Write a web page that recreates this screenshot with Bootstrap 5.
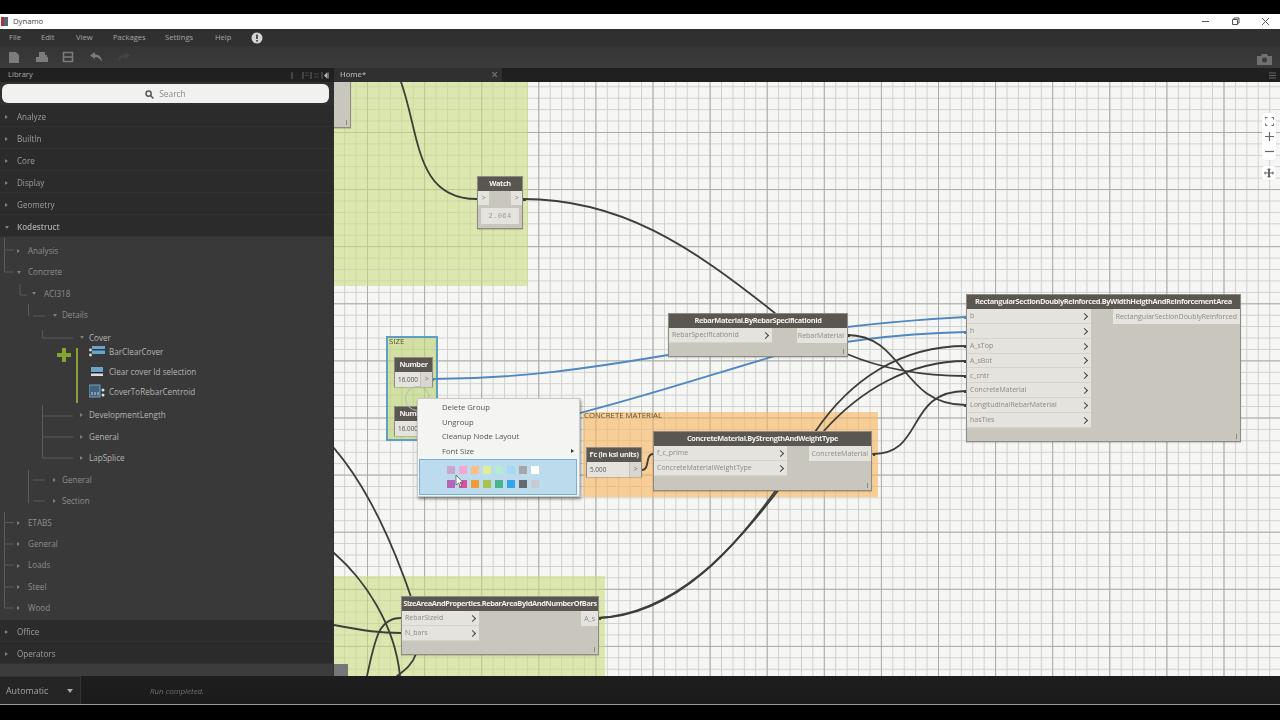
<!DOCTYPE html>
<html lang="en">
<head>
<meta charset="UTF-8" />
<title>Dynamo</title>
<link href="https://cdn.jsdelivr.net/npm/bootstrap@5.3.0/dist/css/bootstrap.min.css" rel="stylesheet" />
<style>
  html, body { height: 720px; overflow: hidden; background: #000; }
  body { font-family: "Open Sans", "Liberation Sans", sans-serif; }
  .app-root { height: 720px; padding-top: 14px; filter: blur(.45px); }

  .title-strip { height: 15px; background: #fff; font-size: 7.7px; color: #444; flex-shrink: 0; }
  .app-logo { width: 7px; height: 9px; margin: 0 5px 0 1px; background: linear-gradient(90deg, #a33 50%, #567 50%); }
  .win-btn { width: 30px; }

  .menu-strip { height: 17px; background: #2f302f; font-size: 7.6px; color: #a5a6a5; padding-left: 9px; flex-shrink: 0; }
  .m-file { width: 32px; } .m-edit { width: 35px; } .m-view { width: 37px; }
  .m-pack { width: 52px; } .m-sett { width: 50px; } .m-help { width: 36px; }
  .tool-strip { height: 22px; background: linear-gradient(#343534, #3a3b3a); padding-left: 8px; flex-shrink: 0; }
  .tool-btn { width: 27.2px; height: 22px; }

  .head-strip { height: 14px; background: #1f201f; font-size: 7.6px; color: #a9aaa9; flex-shrink: 0; }
  .lib-title { width: 334px; padding: 0 5px 0 8px; }
  .tab-home { width: 168px; background: #2f302f; color: #a8a9a8; font-weight: 600; padding: 0 4px 0 6px; }
  .tab-close { color: #777; font-size: 12px; line-height: 1; }

  .work-row { height: 594px; flex-shrink: 0; }
  .lib-panel { width: 334px; background: #2f302f; font-size: 8.1px; }
  .search-wrap { height: 23px; padding: 2px 5px 0 2px; flex-shrink: 0; }
  .search-box { height: 19px; padding-top: 1px; background: #f1f1ef; border-radius: 6px; color: #8b8b8b; font-size: 8.4px; gap: 5px; }
  .lib-head { height: 22px; width: 333px; flex-shrink: 0; background: #2a2b2a; color: #9d9e9d; border-bottom: 1px solid #313231; padding: 3px 0 0 5px; }
  .lib-head .tri-box { width: 12px; }
  .lib-head.is-open { color: #a9aaa9; font-weight: 600; }
  .lib-tree { width: 333px; height: 383px; flex-shrink: 0; background: #383938; padding-top: 3px; }
  .tree-lines { left: 0; top: 0; }
  .tree-row { height: 21.44px; color: #8d8e8d; }
  .tri-box { display: flex; align-items: center; }
  .lvl-1 { padding-left: 17px; } .lvl-1 .tri-box { width: 11px; }
  .lvl-2 { padding-left: 32px; } .lvl-2 .tri-box { width: 12px; }
  .lvl-3 { padding-left: 53px; } .lvl-3 .tri-box { width: 9px; }
  .lvl-4 { padding-left: 80px; color: #b4b5b4; } .lvl-4 .tri-box { width: 9px; }
  .cover-row { margin-top: 2px; height: 20px; }
  .leaf-wrap { height: 57px; padding-left: 57px; }
  .leaf-plus { width: 19px; }
  .leaf-bar { width: 2px; height: 55px; background: #8aa036; flex-shrink: 0; }
  .leaf-list { margin: -6px 0 0 0; padding-left: 11px; color: #b4b5b4; }
  .leaf-row { height: 20px; gap: 4px; }
  .lib-foot { height: 12px; width: 333px; background: #3b3c3b; flex-shrink: 0; }
  .tri-r { width: 0; height: 0; border-left: 3.5px solid #7d7e7d; border-top: 2.5px solid transparent; border-bottom: 2.5px solid transparent; }
  .tri-d { width: 0; height: 0; border-top: 3.5px solid #7d7e7d; border-left: 2.5px solid transparent; border-right: 2.5px solid transparent; }

  .status-strip { height: 29px; flex-shrink: 0; background: linear-gradient(#1d1e1d, #1a1b1a); border-bottom: 1px solid #999; }
  .run-mode { width: 81px; height: 28px; background: #242524; border-right: 1px solid #333; border-top: 1px solid #333; color: #a3a4a3; font-size: 8.9px; padding: 1px 7px 0 6px; }
  .run-mode .tri-d { border-top: 4px solid #aaa; border-left: 3px solid transparent; border-right: 3px solid transparent; }
  .run-msg { color: #6f706f; font-style: italic; font-size: 7.9px; margin: 3px 0 0 69px; }

  .canvas-area { width: 946px; height: 594px; background: #f6f7f5; overflow: hidden; }
  .grid-layer, .wire-layer { left: 0; top: 0; }

  .grp-box { position: absolute; }
  .grp-top { left: 0; top: 0; width: 194px; height: 204px; background: rgba(203, 220, 130, .6); }
  .grp-bot { left: 0; top: 494px; width: 271px; height: 100px; background: rgba(203, 220, 130, .6); }
  .grp-size { left: 52px; top: 254px; width: 52px; height: 105px; background: rgba(190, 212, 120, .65); border: 2px solid #5f9fc4; }
  .grp-conc { left: 249px; top: 330px; width: 295px; height: 85px; background: rgba(248, 180, 95, .62); }
  .grp-name { font-size: 7.8px; color: #5b5438; line-height: 1; position: absolute; left: 1px; top: 0; white-space: nowrap; }

  .dyn-node { position: absolute; background: #c9c6bd; border: 1px solid #8d8b82; box-shadow: 0 1px 1px rgba(0,0,0,.15); font-size: 7px; color: #8a8a84; }
  .dyn-head { height: 14px; padding-bottom: 1px; background: #5a5650; color: #f2f1ee; font-weight: 700; font-size: 7.4px; letter-spacing: -.38px; white-space: nowrap; }
  .port-in { height: 14.85px; background: #e5e3dd; border-bottom: 1px solid #d5d3cc; padding: 1px 1px 0 3px; }
  .port-out { height: 14.85px; background: #e5e3dd; padding: 1px 3px 0; }
  .port-chev { width: 5px; height: 5px; border-top: 1.6px solid #444; border-right: 1.6px solid #444; transform: rotate(45deg); margin-right: 3px; }
  .node-tick { position: absolute; right: 3px; bottom: 2px; width: 1px; height: 5px; background: #8d8b82; }

  .n-stub { left: -2px; top: -2px; width: 19px; height: 48px; }
  .n-watch { left: 143px; top: 94px; width: 46px; height: 53px; }
  .n-rebar { left: 334px; top: 231px; width: 180px; height: 44px; }
  .n-conc { left: 319px; top: 349px; width: 219px; height: 60px; }
  .n-fc { left: 252px; top: 365px; width: 56px; height: 30px; }
  .n-num1 { left: 60px; top: 275px; width: 39px; height: 30px; }
  .n-num2 { left: 60px; top: 324px; width: 39px; height: 30px; }
  .n-rect { left: 632px; top: 212px; width: 275px; height: 148px; }
  .n-size { left: 67px; top: 514px; width: 198px; height: 59px; }
  .in-rebar { width: 103px; } .out-rebar { width: 50px; }
  .in-conc { width: 133px; } .out-conc { width: 62px; }
  .in-rect { width: 124px; } .out-rect { width: 127px; }
  .in-size { width: 77px; } .out-size { width: 17px; }
  .watch-cell { width: 11px; height: 14px; background: #e5e3dd; font-family: "Liberation Mono", monospace; font-size: 7px; }
  .watch-val { height: 16px; margin: 3px 3px 0; background: #e5e3dd; font-family: "Liberation Mono", monospace; font-size: 7px; letter-spacing: .4px; color: #999; }
  .val-cell { background: #e5e3dd; color: #555; font-size: 6.4px; padding-left: 3px; height: 15px; }
  .val-port { background: #d8d6cf; border-left: 1px solid #c4c2ba; width: 12px; height: 15px; flex-shrink: 0; font-family: "Liberation Mono", monospace; font-size: 7px; color: #777; }

  .hover-ring { position: absolute; left: 71px; top: 304px; width: 25px; height: 25px; border-radius: 50%; border: 1.5px solid #a9bfc4; }
  .ctx-menu { position: absolute; left: 83px; top: 316px; width: 163px; height: 99px; min-width: 0; padding: 0; margin: 0; background: #f4f4f2; border: 1px solid #c9c9c6; border-radius: 0; box-shadow: 1px 2px 3px rgba(0,0,0,.45); font-size: 7.7px; }
  .ctx-menu .dropdown-item { height: 14.7px; padding: 0 0 0 24px; color: #555; line-height: 14.7px; position: relative; }
  .ctx-list { padding-top: 1px; }
  .ctx-arrow { position: absolute; right: 5px; top: 5px; border-left: 3.5px solid #333; border-top: 2.5px solid transparent; border-bottom: 2.5px solid transparent; }
  .swatch-box { margin: 0 2px 0 1px; height: 36px; background: #bcdcee; border: 1px solid #73b3d8; padding: 6px 0 0 27px; gap: 6px; }
  .swatch-row { gap: 4px; }
  .swatch { width: 8px; height: 8px; }
  .sw-a1 { background: #c9a6cf; } .sw-a2 { background: #f5a6d5; } .sw-a3 { background: #fbc08a; } .sw-a4 { background: #e0ee9a; }
  .sw-a5 { background: #b5ecd0; } .sw-a6 { background: #a4d8f5; } .sw-a7 { background: #a6a6a6; } .sw-a8 { background: #fff; }
  .sw-b1 { background: #b565b9; } .sw-b2 { background: #dd4f9e; } .sw-b3 { background: #f39c36; } .sw-b4 { background: #a6c24f; }
  .sw-b5 { background: #48b48e; } .sw-b6 { background: #35a4ee; } .sw-b7 { background: #646a6e; } .sw-b8 { background: #c8ccd0; }
  .mouse-arrow { position: absolute; left: 121px; top: 392px; z-index: 1001; }

  .zoom-pill { right: 4px; top: 31px; width: 14px; height: 47px; background: #fff; border-radius: 2px; box-shadow: 0 0 1px rgba(0,0,0,.2); }
  .pan-pill { right: 4px; top: 84px; width: 14px; height: 14px; background: #fff; border-radius: 2px; box-shadow: 0 0 1px rgba(0,0,0,.2); }
  .h-stub { left: 0; bottom: 0; width: 14px; height: 12px; background: #777; }
</style>
</head>
<body>
<div class="app-root d-flex flex-column">

  <div class="title-strip d-flex align-items-center">
    <span class="app-logo"></span><span>Dynamo</span>
    <div class="ms-auto d-flex align-items-center">
      <span class="win-btn d-flex justify-content-center"><svg width="9" height="9"><path d="M1 4.500h7" stroke="#555"/></svg></span>
      <span class="win-btn d-flex justify-content-center"><svg width="9" height="9" fill="none" stroke="#555"><path d="M1.500 2.500h5v5h-5zM3 2.500V1h5v5H6.500"/></svg></span>
      <span class="win-btn d-flex justify-content-center"><svg width="9" height="9" stroke="#555"><path d="M1 1l7 7M8 1L1 8"/></svg></span>
    </div>
  </div>

  <div class="menu-strip d-flex align-items-center">
    <span class="m-file">File</span><span class="m-edit">Edit</span><span class="m-view">View</span>
    <span class="m-pack">Packages</span><span class="m-sett">Settings</span><span class="m-help">Help</span>
    <svg width="12" height="12"><circle cx="6" cy="6" r="5.500" fill="#d5d5d5"/><rect x="5.200" y="2.500" width="1.600" height="4.500" fill="#333"/><rect x="5.200" y="8" width="1.600" height="1.600" fill="#333"/></svg>
  </div>

  <div class="tool-strip d-flex align-items-center">
    <span class="tool-btn d-flex align-items-center"><svg width="12" height="12"><path d="M1 1h7l3 3v8H1z" fill="#7b7c7b"/></svg></span>
    <span class="tool-btn d-flex align-items-center"><svg width="14" height="12"><path d="M4 1h6v3h2v2h1v5H1V6h3z" fill="#7b7c7b"/></svg></span>
    <span class="tool-btn d-flex align-items-center"><svg width="12" height="12" fill="none" stroke="#7b7c7b" stroke-width="1.600"><path d="M1.500 1.500h9v9h-9zM1.500 6h9"/></svg></span>
    <span class="tool-btn d-flex align-items-center"><svg width="13" height="11"><path d="M5 0L0 3.500 5 7V5c3 0 5 1.500 7 5 0-5-3-7.500-7-7.500z" fill="#7b7c7b"/></svg></span>
    <span class="tool-btn d-flex align-items-center"><svg width="13" height="11"><path d="M8 0l5 3.500L8 7V5C5 5 3 6.500 1 10c0-5 3-7.500 7-7.500z" fill="#444544"/></svg></span>
    <span class="ms-auto me-2"><svg width="15" height="12"><path d="M0 3h4l1-2h5l1 2h4v9H0z" fill="#6f706f"/><circle cx="7.500" cy="7" r="2.500" fill="#3a3b3a"/></svg></span>
  </div>

  <div class="head-strip d-flex">
    <div class="lib-title d-flex align-items-center justify-content-between">
      <span>Library</span>
      <svg width="38" height="9"><path d="M1 1v7M12 1v7M20 1v7M31 1v7" stroke="#666"/><path d="M14 2h4M14 4.500h4" stroke="#444"/><path d="M23 3h5M23 6h5" stroke="#444"/><path d="M33 4.500l3-3v6z" fill="#bbb"/><path d="M37 1.500v6" stroke="#bbb"/></svg>
    </div>
    <div class="tab-home d-flex align-items-center justify-content-between"><span>Home*</span><span class="tab-close">×</span></div>
    <div class="flex-grow-1 d-flex justify-content-end align-items-center pe-1">
      <svg width="7" height="7"><path d="M0 1h7M0 3.500h7M0 6h7" stroke="#666"/></svg>
    </div>
  </div>

  <div class="work-row d-flex">
    <aside class="lib-panel d-flex flex-column">
      <div class="search-wrap">
        <div class="search-box d-flex align-items-center justify-content-center">
          <svg width="9" height="9" fill="none" stroke="#555" stroke-width="1.500"><circle cx="3.600" cy="3.600" r="2.600"/><path d="M5.500 5.500L8.500 8.500"/></svg>
          <span>Search</span>
        </div>
      </div>
      <div class="lib-head d-flex align-items-center"><span class="tri-box"><span class="tri-r"></span></span>Analyze</div>
      <div class="lib-head d-flex align-items-center"><span class="tri-box"><span class="tri-r"></span></span>BuiltIn</div>
      <div class="lib-head d-flex align-items-center"><span class="tri-box"><span class="tri-r"></span></span>Core</div>
      <div class="lib-head d-flex align-items-center"><span class="tri-box"><span class="tri-r"></span></span>Display</div>
      <div class="lib-head d-flex align-items-center"><span class="tri-box"><span class="tri-r"></span></span>Geometry</div>
      <div class="lib-head is-open d-flex align-items-center"><span class="tri-box"><span class="tri-d"></span></span>Kodestruct</div>

      <div class="lib-tree position-relative">
        <svg class="tree-lines position-absolute" width="333" height="383" viewBox="0 237 333 383" fill="none" stroke="#5a5b5a">
          <path d="M4.500 238V272H14M4.500 250H14"/>
          <path d="M20 284V295H27"/>
          <path d="M28.500 304V316M33 316H45"/>
          <path d="M42.500 330V338H73"/>
          <path d="M42.500 405V458H73M42.500 416H73M42.500 437H73"/>
          <path d="M28.500 470V503M33 480H45M33 501H45"/>
          <path d="M4.500 512V608H14M4.500 522.500H14M4.500 544H14M4.500 565H14M4.500 587H14"/>
        </svg>
        <div class="tree-row lvl-1 d-flex align-items-center"><span class="tri-box"><span class="tri-r"></span></span>Analysis</div>
        <div class="tree-row lvl-1 d-flex align-items-center"><span class="tri-box"><span class="tri-d"></span></span>Concrete</div>
        <div class="tree-row lvl-2 d-flex align-items-center"><span class="tri-box"><span class="tri-d"></span></span>ACI318</div>
        <div class="tree-row lvl-3 d-flex align-items-center"><span class="tri-box"><span class="tri-d"></span></span>Details</div>
        <div class="tree-row lvl-4 cover-row d-flex align-items-center"><span class="tri-box"><span class="tri-d"></span></span>Cover</div>
        <div class="leaf-wrap d-flex">
          <div class="leaf-plus"><svg class="d-block" width="14" height="14"><path d="M5 0h4v5h5v4H9v5H5V9H0V5h5z" fill="#86a32f"/></svg></div>
          <span class="leaf-bar"></span>
          <ul class="leaf-list list-unstyled">
            <li class="leaf-row d-flex align-items-center"><svg width="16" height="13"><rect x="3" y="1" width="13" height="8" fill="#6ea3c9"/><rect x="3" y="4" width="13" height="1.500" fill="#1e3a55"/><circle cx="1.500" cy="5" r="1.400" fill="#ddd"/><circle cx="1.500" cy="10" r="1.400" fill="#ddd"/></svg><span>BarClearCover</span></li>
            <li class="leaf-row d-flex align-items-center"><svg width="16" height="11"><rect x="2" y="1" width="12" height="5" fill="#6ea3c9"/><rect x="2" y="6" width="12" height="1.500" fill="#222"/><rect x="2" y="7.500" width="12" height="2.500" fill="#ddd"/></svg><span>Clear cover Id selection</span></li>
            <li class="leaf-row d-flex align-items-center"><svg width="16" height="15"><rect x="0" y="1" width="11" height="12" fill="#41637e" stroke="#6ea3c9"/><path d="M3 8v3M6 8v3M9 8v3" stroke="#ccc"/><circle cx="14" cy="6" r="1.500" fill="#ddd"/><circle cx="14" cy="11" r="1.500" fill="#ddd"/></svg><span>CoverToRebarCentroid</span></li>
          </ul>
        </div>
        <div class="tree-row lvl-4 d-flex align-items-center"><span class="tri-box"><span class="tri-r"></span></span>DevelopmentLength</div>
        <div class="tree-row lvl-4 d-flex align-items-center"><span class="tri-box"><span class="tri-r"></span></span>General</div>
        <div class="tree-row lvl-4 d-flex align-items-center"><span class="tri-box"><span class="tri-r"></span></span>LapSplice</div>
        <div class="tree-row lvl-3 d-flex align-items-center"><span class="tri-box"><span class="tri-r"></span></span>General</div>
        <div class="tree-row lvl-3 d-flex align-items-center"><span class="tri-box"><span class="tri-r"></span></span>Section</div>
        <div class="tree-row lvl-1 d-flex align-items-center"><span class="tri-box"><span class="tri-r"></span></span>ETABS</div>
        <div class="tree-row lvl-1 d-flex align-items-center"><span class="tri-box"><span class="tri-r"></span></span>General</div>
        <div class="tree-row lvl-1 d-flex align-items-center"><span class="tri-box"><span class="tri-r"></span></span>Loads</div>
        <div class="tree-row lvl-1 d-flex align-items-center"><span class="tri-box"><span class="tri-r"></span></span>Steel</div>
        <div class="tree-row lvl-1 d-flex align-items-center"><span class="tri-box"><span class="tri-r"></span></span>Wood</div>
      </div>

      <div class="lib-head d-flex align-items-center"><span class="tri-box"><span class="tri-r"></span></span>Office</div>
      <div class="lib-head d-flex align-items-center"><span class="tri-box"><span class="tri-r"></span></span>Operators</div>
      <div class="lib-foot"></div>
    </aside>

    <main class="canvas-area position-relative">
      <svg class="grid-layer position-absolute" width="946" height="594">
        <defs>
          <pattern id="minorGrid" x="10.160" y="4.300" width="11.420" height="11.420" patternUnits="userSpaceOnUse">
            <path d="M0 .5H11.420M.5 0V11.420" stroke="#cfd1cf" stroke-width="1" fill="none"/>
          </pattern>
          <pattern id="majorGrid" x="33" y="50" width="57.100" height="57.100" patternUnits="userSpaceOnUse">
            <path d="M0 .5H57.100M.5 0V57.100" stroke="#a9aca9" stroke-width="1" fill="none"/>
          </pattern>
        </defs>
        <rect width="946" height="594" fill="url(#minorGrid)"/>
        <rect width="946" height="594" fill="url(#majorGrid)"/>
      </svg>

      <div class="grp-box grp-top"></div>
      <div class="grp-box grp-bot"></div>
      <div class="grp-box grp-size"><span class="grp-name">SIZE</span></div>
      <div class="grp-box grp-conc"><span class="grp-name">CONCRETE MATERIAL</span></div>

      <svg class="wire-layer position-absolute" width="946" height="594" viewBox="334 82 946 594" fill="none" stroke-linecap="round">
        <g stroke="#4f87c0" stroke-width="1.800">
          <path d="M431 379C520 379 590 368 668 355C760 338 860 322 966 317"/>
          <path d="M580 413C650 395 710 375 775 356C830 342 890 334 966 332"/>
        </g>
        <g stroke="#3c3e38" stroke-width="1.800">
          <path d="M401 82C420 135 415 199 477 199"/>
          <path d="M523 199C620 199 690 245 776 314"/>
          <path d="M847 335C905 335 900 405 966 405"/>
          <path d="M847 354C880 368 920 376 966 376"/>
          <path d="M873 454C925 454 905 391 966 391"/>
          <path d="M598 618C700 615 770 500 815 432C850 380 900 346 966 346"/>
          <path d="M598 618C700 612 765 505 823 432C860 390 910 361 966 361"/>
          <path d="M642 470C650 470 645 454 653 454"/>
          <path d="M334 448C370 490 395 550 411 597"/>
          <path d="M334 553C365 580 395 625 400 676"/>
          <path d="M334 625C365 631 380 633 401 633"/>
          <path d="M367 676C375 640 378 618 401 618"/>
          <path d="M397 676C405 670 412 665 416 654"/>
        </g>
        <g fill="#3c3e38" stroke="none">
          <rect x="964" y="345" width="3" height="3"/><rect x="964" y="360" width="3" height="3"/>
          <rect x="964" y="375" width="3" height="3"/><rect x="964" y="390" width="3" height="3"/>
          <rect x="964" y="404" width="3" height="3"/><rect x="847" y="334" width="3" height="3"/>
          <rect x="598" y="617" width="3" height="3"/><rect x="523" y="198" width="3" height="3"/>
          <rect x="873" y="453" width="2" height="3"/>
        </g>
        <g fill="#4f87c0" stroke="none">
          <rect x="964" y="316" width="3" height="3"/><rect x="964" y="331" width="3" height="3"/>
          <rect x="431" y="378" width="3" height="3"/>
        </g>
      </svg>

      <div class="dyn-node n-stub"><span class="node-tick"></span></div>

      <div class="dyn-node n-watch">
        <div class="dyn-head d-flex align-items-center justify-content-center">Watch</div>
        <div class="d-flex justify-content-between mt-0">
          <span class="watch-cell d-flex align-items-center justify-content-center">&gt;</span>
          <span class="watch-cell d-flex align-items-center justify-content-center">&gt;</span>
        </div>
        <div class="watch-val d-flex align-items-center justify-content-center">2.064</div>
      </div>

      <div class="dyn-node n-rebar">
        <div class="dyn-head d-flex align-items-center justify-content-center">RebarMaterial.ByRebarSpecificationId</div>
        <div class="d-flex justify-content-between">
          <div class="in-rebar port-in d-flex align-items-center justify-content-between"><span>RebarSpecificationId</span><span class="port-chev"></span></div>
          <div class="out-rebar port-out d-flex align-items-center justify-content-end"><span>RebarMaterial</span></div>
        </div>
        <span class="node-tick"></span>
      </div>

      <div class="dyn-node n-fc">
        <div class="dyn-head d-flex align-items-center justify-content-center">f'c (in ksi units)</div>
        <div class="d-flex"><span class="val-cell flex-grow-1 d-flex align-items-center">5.000</span><span class="val-port d-flex align-items-center justify-content-center">&gt;</span></div>
      </div>

      <div class="dyn-node n-conc">
        <div class="dyn-head d-flex align-items-center justify-content-center">ConcreteMaterial.ByStrengthAndWeightType</div>
        <div class="d-flex justify-content-between">
          <div class="in-conc">
            <div class="port-in d-flex align-items-center justify-content-between"><span>f_c_prime</span><span class="port-chev"></span></div>
            <div class="port-in d-flex align-items-center justify-content-between"><span>ConcreteMaterialWeightType</span><span class="port-chev"></span></div>
          </div>
          <div class="out-conc port-out d-flex align-items-center justify-content-end"><span>ConcreteMaterial</span></div>
        </div>
        <span class="node-tick"></span>
      </div>

      <div class="dyn-node n-num1">
        <div class="dyn-head d-flex align-items-center justify-content-center">Number</div>
        <div class="d-flex"><span class="val-cell flex-grow-1 d-flex align-items-center">16.000</span><span class="val-port d-flex align-items-center justify-content-center">&gt;</span></div>
      </div>
      <div class="dyn-node n-num2">
        <div class="dyn-head d-flex align-items-center justify-content-center">Number</div>
        <div class="d-flex"><span class="val-cell flex-grow-1 d-flex align-items-center">16.000</span><span class="val-port d-flex align-items-center justify-content-center">&gt;</span></div>
      </div>

      <div class="dyn-node n-rect">
        <div class="dyn-head d-flex align-items-center justify-content-center">RectangularSectionDoublyReinforced.ByWidthHeigthAndReinforcementArea</div>
        <div class="d-flex justify-content-between">
          <div class="in-rect">
            <div class="port-in d-flex align-items-center justify-content-between"><span>b</span><span class="port-chev"></span></div>
            <div class="port-in d-flex align-items-center justify-content-between"><span>h</span><span class="port-chev"></span></div>
            <div class="port-in d-flex align-items-center justify-content-between"><span>A_sTop</span><span class="port-chev"></span></div>
            <div class="port-in d-flex align-items-center justify-content-between"><span>A_sBot</span><span class="port-chev"></span></div>
            <div class="port-in d-flex align-items-center justify-content-between"><span>c_cntr</span><span class="port-chev"></span></div>
            <div class="port-in d-flex align-items-center justify-content-between"><span>ConcreteMaterial</span><span class="port-chev"></span></div>
            <div class="port-in d-flex align-items-center justify-content-between"><span>LongitudinalRebarMaterial</span><span class="port-chev"></span></div>
            <div class="port-in d-flex align-items-center justify-content-between"><span>hasTies</span><span class="port-chev"></span></div>
          </div>
          <div class="out-rect port-out d-flex align-items-center justify-content-end"><span>RectangularSectionDoublyReinforced</span></div>
        </div>
        <span class="node-tick"></span>
      </div>

      <div class="dyn-node n-size">
        <div class="dyn-head d-flex align-items-center justify-content-center">SizeAreaAndProperties.RebarAreaByIdAndNumberOfBars</div>
        <div class="d-flex justify-content-between">
          <div class="in-size">
            <div class="port-in d-flex align-items-center justify-content-between"><span>RebarSizeId</span><span class="port-chev"></span></div>
            <div class="port-in d-flex align-items-center justify-content-between"><span>N_bars</span><span class="port-chev"></span></div>
          </div>
          <div class="out-size port-out d-flex align-items-center justify-content-end"><span>A_s</span></div>
        </div>
        <span class="node-tick"></span>
      </div>

      <span class="hover-ring"></span>

      <div class="ctx-menu dropdown-menu d-block">
        <div class="ctx-list">
          <a class="dropdown-item" href="#">Delete Group</a>
          <a class="dropdown-item" href="#">Ungroup</a>
          <a class="dropdown-item" href="#">Cleanup Node Layout</a>
          <a class="dropdown-item" href="#">Font Size<span class="ctx-arrow"></span></a>
        </div>
        <div class="swatch-box d-flex flex-column">
          <div class="swatch-row d-flex">
            <span class="swatch sw-a1"></span><span class="swatch sw-a2"></span><span class="swatch sw-a3"></span><span class="swatch sw-a4"></span><span class="swatch sw-a5"></span><span class="swatch sw-a6"></span><span class="swatch sw-a7"></span><span class="swatch sw-a8"></span>
          </div>
          <div class="swatch-row d-flex">
            <span class="swatch sw-b1"></span><span class="swatch sw-b2"></span><span class="swatch sw-b3"></span><span class="swatch sw-b4"></span><span class="swatch sw-b5"></span><span class="swatch sw-b6"></span><span class="swatch sw-b7"></span><span class="swatch sw-b8"></span>
          </div>
        </div>
      </div>
      <svg class="mouse-arrow" width="10" height="14"><path d="M1 1v10l2.500-2 2 4 1.500-.700-2-4h3z" fill="#fff" stroke="#555" stroke-width=".8"/></svg>

      <div class="zoom-pill position-absolute d-flex flex-column align-items-center justify-content-between py-1">
        <svg width="9" height="9" fill="none" stroke="#666"><path d="M0 2.500V.5h2.500M6.500.5H8.500v2M8.500 6.500v2H6.500M2.500 8.500H.5v-2"/></svg>
        <svg width="9" height="9" stroke="#666" stroke-width="1.200"><path d="M0 4.500h9M4.500 0v9"/></svg>
        <svg width="9" height="9" stroke="#666" stroke-width="1.200"><path d="M0 4.500h9"/></svg>
      </div>
      <div class="pan-pill position-absolute d-flex align-items-center justify-content-center">
        <svg width="10" height="10" fill="#666"><path d="M5 0l2 2H6v2.500h2.500V3L10 5 8.500 7V5.500H6V8h1l-2 2-2-2h1V5.500H1.500V7L0 5l1.500-2v1.500H4V2H3z"/></svg>
      </div>
      <div class="h-stub position-absolute"></div>
    </main>
  </div>

  <div class="status-strip d-flex align-items-center">
    <div class="run-mode d-flex align-items-center justify-content-between"><span>Automatic</span><span class="tri-d"></span></div>
    <span class="run-msg">Run completed.</span>
  </div>
</div>
<script src="https://cdn.jsdelivr.net/npm/bootstrap@5.3.0/dist/js/bootstrap.bundle.min.js"></script>
</body>
</html>
